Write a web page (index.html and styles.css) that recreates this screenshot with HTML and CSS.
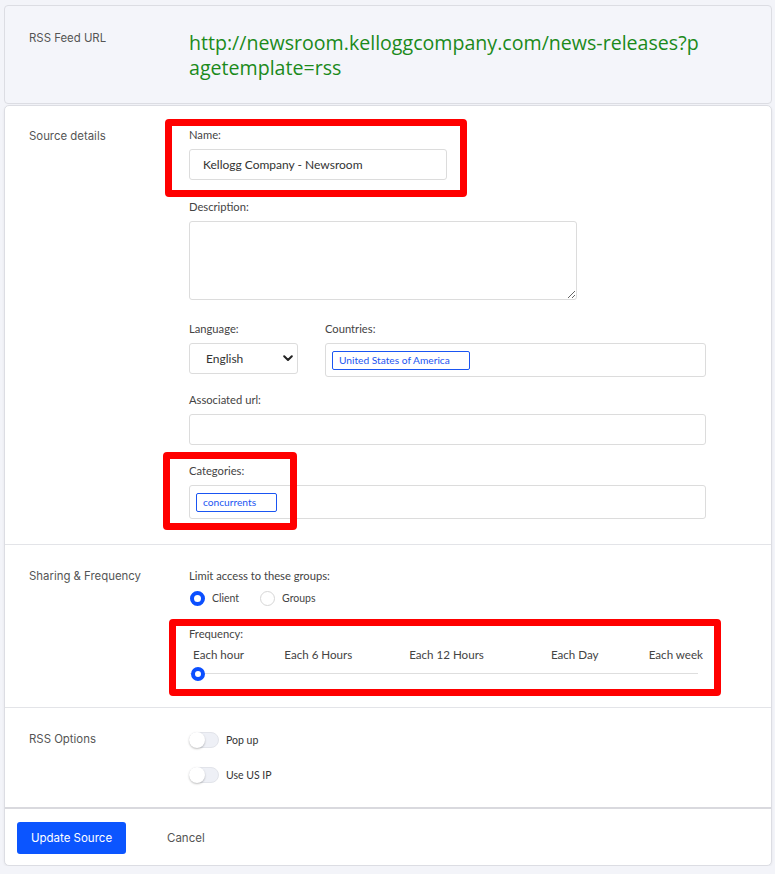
FILE: index.html
```html
<!DOCTYPE html>
<html lang="en">
<head>
  <meta charset="UTF-8">
  <meta name="viewport" content="width=device-width, initial-scale=1.0">
  <title>Edit RSS Source</title>
  <link rel="stylesheet" href="styles.css">
</head>
<body>
  <div class="page">
    <!-- feed url -->
    <div class="card card-url">
      <div class="row">
        <div class="row-label">RSS Feed URL</div>
        <div class="row-body">
          <div class="feed-url">http://newsroom.kelloggcompany.com/news-releases?pagetemplate=rss</div>
        </div>
      </div>
    </div>

    <div class="card card-form">
      <!-- source details -->
      <section class="row">
        <div class="row-label">Source details</div>
        <div class="row-body">
          <div class="field field-name">
            <label class="field-label">Name:</label>
            <input class="control control-name" type="text" value="Kellogg Company - Newsroom">
            <span class="mark mark-name"></span>
          </div>

          <div class="field field-desc">
            <label class="field-label">Description:</label>
            <textarea class="control control-desc"></textarea>
          </div>

          <div class="field-row">
            <div class="field">
              <label class="field-label">Language:</label>
              <div class="select">
                <select class="control control-select">
                  <option>English</option>
                </select>
                <svg class="select-arrow" width="10" height="7" viewBox="0 0 10 7">
                  <path d="M1.2 1.2 L5 5 L8.8 1.2" fill="none" stroke="#222" stroke-width="2" stroke-linecap="round" stroke-linejoin="round"/>
                </svg>
              </div>
            </div>
            <div class="field field-grow">
              <label class="field-label">Countries:</label>
              <div class="control tag-box">
                <span class="tag tag-country">United States of America</span>
              </div>
            </div>
          </div>

          <div class="field field-url">
            <label class="field-label">Associated url:</label>
            <input class="control" type="text">
          </div>

          <div class="field field-last">
            <label class="field-label">Categories:</label>
            <div class="control tag-box">
              <span class="tag tag-cat">concurrents</span>
            </div>
            <span class="mark mark-cat"></span>
          </div>
        </div>
      </section>

      <!-- sharing -->
      <section class="row row-sharing">
        <div class="row-label">Sharing &amp; Frequency</div>
        <div class="row-body">
          <div class="field-label">Limit access to these groups:</div>
          <div class="radios">
            <label class="radio"><span class="radio-dot is-checked"></span>Client</label>
            <label class="radio"><span class="radio-dot"></span>Groups</label>
          </div>

          <div class="field freq">
            <div class="field-label freq-label">Frequency:</div>
            <div class="freq-ticks">
              <span class="tick tick-first">Each hour</span>
              <span class="tick">Each 6 Hours</span>
              <span class="tick">Each 12 Hours</span>
              <span class="tick">Each Day</span>
              <span class="tick tick-last">Each week</span>
            </div>
            <div class="slider">
              <span class="slider-thumb"></span>
            </div>
            <span class="mark mark-freq"></span>
          </div>
        </div>
      </section>

      <!-- rss options -->
      <section class="row row-options">
        <div class="row-label">RSS Options</div>
        <div class="row-body">
          <label class="toggle"><span class="toggle-track"><span class="toggle-knob"></span></span>Pop up</label>
          <label class="toggle"><span class="toggle-track"><span class="toggle-knob"></span></span>Use US IP</label>
        </div>
      </section>

      <div class="form-footer">
        <button class="btn-primary" type="button">Update Source</button>
        <button class="btn-link" type="button">Cancel</button>
      </div>
    </div>
  </div>
</body>
</html>
```

FILE: styles.css
```css
body {
  margin: 0;
  padding: 0;
  background: #f3f4f9;
  font-family: "Lato", "Open Sans", sans-serif;
  color: #333;
}

.page {
  padding: 5px 3px 0 4px;
}

.card {
  background: #fff;
  border: 1px solid #dcdde3;
  border-radius: 5px;
}

.card-url {
  background: #f4f5fa;
  height: 97px;
  margin-bottom: 1px;
  border-radius: 4px;
}

.card-form {
  box-shadow: 0 1px 3px rgba(0, 0, 0, 0.06);
}

/* label | content */
.row {
  display: grid;
  grid-template-columns: 160px 517px;
  padding: 22px 0 25px 24px;
  border-bottom: 1px solid #e3e4e8;
}

.card-url .row {
  padding: 24px 0 0 24px;
  border-bottom: none;
}

.row-label {
  font-family: "Inter", "Lato", sans-serif;
  font-size: 11.4px;
  line-height: 16px;
  color: #555;
}

.feed-url {
  width: 514px;
  font-family: "Open Sans", sans-serif;
  font-size: 19.6px;
  line-height: 25px;
  color: #1b8a1b;
  word-break: break-all;
}

/* fields */
.field {
  position: relative;
  margin-bottom: 20px;
}

.field-label {
  display: block;
  font-size: 11.2px;
  line-height: 14px;
  color: #444;
  margin-bottom: 7px;
}

.control {
  display: block;
  box-sizing: border-box;
  width: 100%;
  height: 31px;
  margin: 0;
  padding: 0 13px;
  border: 1px solid #dcdcdc;
  border-radius: 3px;
  background: #fff;
  font-family: "Lato", sans-serif;
  font-size: 12px;
  color: #333;
  outline: none;
}

.control-name {
  width: 258px;
}

.field-desc {
  margin-bottom: 22px;
}

.control-desc {
  width: 388px;
  height: 79px;
  resize: both;
}

.field-row {
  display: flex;
  gap: 27px;
  margin-bottom: 16px;
}

.field-row .field {
  margin-bottom: 0;
}

.field-grow {
  flex: 1;
}

.field-url {
  margin-bottom: 19px;
}

.select {
  position: relative;
  width: 109px;
}

.control-select {
  appearance: none;
  -webkit-appearance: none;
  padding-left: 16px;
  font-size: 12px;
}

.select-arrow {
  position: absolute;
  right: 5px;
  top: 12px;
}

.tag-box {
  height: 34px;
  padding: 7px 6px;
  display: flex;
  align-items: flex-start;
}

.tag {
  box-sizing: border-box;
  height: 19px;
  line-height: 17px;
  border: 1px solid #1a55f2;
  border-radius: 2px;
  color: #1a55f2;
  font-size: 10.2px;
  padding: 0 6px;
  white-space: nowrap;
}

.tag-country {
  width: 138px;
}

.tag-cat {
  width: 81px;
}

.field-last {
  margin-bottom: 0;
}

/* red annotation boxes */
.mark {
  position: absolute;
  box-sizing: border-box;
  border: 7px solid #ff0000;
  border-radius: 4px;
  pointer-events: none;
}

.mark-name {
  left: -24px;
  top: -9px;
  width: 302px;
  height: 78px;
}

.mark-cat {
  left: -26px;
  top: -12px;
  width: 134px;
  height: 78px;
}

.mark-freq {
  left: -20px;
  top: -8px;
  width: 552px;
  height: 77px;
}

/* sharing */
.row-sharing {
  padding: 24px 0 26px 24px;
}

.row-sharing .row-label {
  margin-top: -1px;
}

.radios {
  display: flex;
  gap: 20px;
  margin-bottom: 21px;
}

.radio {
  display: flex;
  align-items: center;
  gap: 7px;
  height: 16px;
  font-size: 10.5px;
  color: #444;
}

.radio-dot {
  box-sizing: border-box;
  width: 15px;
  height: 15px;
  margin-left: 1px;
  border: 1px solid #d6d6d6;
  border-radius: 50%;
  background: #fff;
}

.radio-dot.is-checked {
  border: 4px solid #0b4fff;
}

.freq {
  margin-bottom: 0;
}

.freq-label {
  margin-bottom: 6px;
}

.freq-ticks {
  display: grid;
  grid-template-columns: 1fr 2fr 2fr 2fr 1fr;
  width: 513px;
  margin-left: 1px;
  font-size: 11.6px;
  line-height: 16px;
  color: #444;
  white-space: nowrap;
}

.tick {
  justify-self: center;
}

.tick-first {
  justify-self: start;
  padding-left: 3px;
}

.tick-last {
  justify-self: end;
}

.slider {
  position: relative;
  width: 508px;
  height: 14px;
  margin: 4px 0 0 1px;
}

.slider::before {
  content: "";
  position: absolute;
  left: 0;
  right: 0;
  top: 6px;
  height: 1px;
  background: #dedede;
}

.slider-thumb {
  position: absolute;
  left: 1px;
  top: 0;
  box-sizing: border-box;
  width: 14px;
  height: 14px;
  border: 4px solid #0b4fff;
  border-radius: 50%;
  background: #fff;
}

/* options */
.row-options {
  padding: 24px 0 24px 24px;
  border-bottom: none;
}

.row-options .row-label {
  margin-top: -1px;
}

.toggle {
  display: flex;
  align-items: center;
  gap: 7px;
  height: 16px;
  font-size: 10.5px;
  color: #333;
}

.toggle + .toggle {
  margin-top: 19px;
}

.toggle-track {
  position: relative;
  box-sizing: border-box;
  width: 30px;
  height: 16px;
  border: 1px solid #e2e4ea;
  border-radius: 8px;
  background: #eef0f6;
}

.toggle-knob {
  position: absolute;
  left: -1px;
  top: -1px;
  width: 16px;
  height: 16px;
  border-radius: 50%;
  background: #fff;
  box-shadow: 0 1px 2px rgba(0, 0, 0, 0.25);
}

/* footer */
.form-footer {
  display: flex;
  align-items: center;
  gap: 41px;
  padding: 13px 12px 11px;
  border-top: 2px solid #d9d9de;
}

.btn-primary {
  width: 109px;
  height: 32px;
  border: none;
  border-radius: 3px;
  background: #0b55ff;
  color: #fff;
  font-family: "Inter", sans-serif;
  font-size: 11.5px;
  padding: 0;
}

.btn-link {
  border: none;
  background: none;
  padding: 0;
  font-family: "Inter", sans-serif;
  font-size: 11.5px;
  color: #555;
}
```
